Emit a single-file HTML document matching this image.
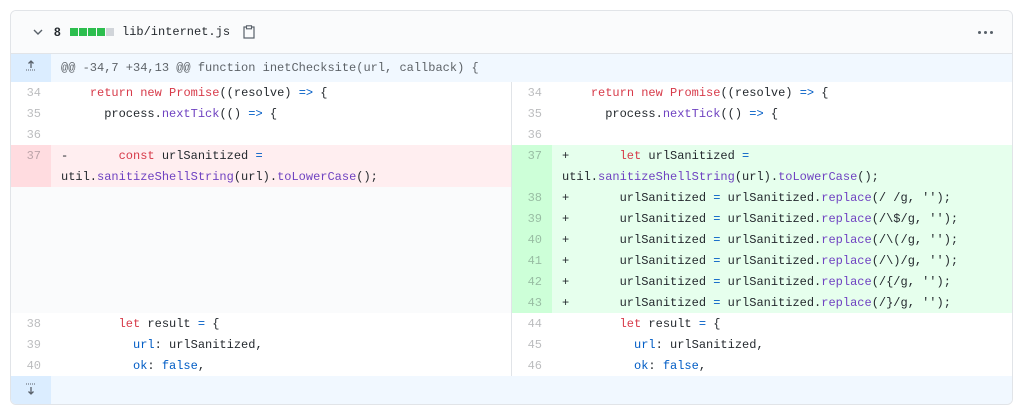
<!DOCTYPE html>
<html><head><meta charset="utf-8"><style>
*{margin:0;padding:0;box-sizing:border-box}
body{width:1023px;height:415px;background:#fff;position:relative;overflow:hidden;font-family:"Liberation Mono",monospace;font-size:12px;color:#24292e}
.box{position:absolute;left:10px;top:10px;width:1003px;height:395px;border:1px solid #e1e4e8;border-radius:6px;overflow:hidden}
.hdr{position:absolute;left:0;top:0;width:1001px;height:43px;background:#fafbfc;border-bottom:1px solid #e1e4e8}
.n{position:absolute;width:40px;text-align:right;padding-right:10px;color:rgba(27,31,35,.3);line-height:21px;top:0}
.c{position:absolute;padding-left:10px;line-height:21px;white-space:pre}
.k{color:#d73a49}.f{color:#6f42c1}.b{color:#005cc5}
</style></head><body>
<div class="box">
 <div class="hdr">
  <svg style="position:absolute;left:22px;top:16px" width="10" height="10" viewBox="0 0 10 10"><path d="M1 3l4 4 4-4" fill="none" stroke="#586069" stroke-width="1.4"/></svg>
  <div style="position:absolute;left:43px;top:12px;font-size:12px;line-height:18px;font-family:'Liberation Sans',sans-serif;color:#24292e;font-weight:bold">8</div>
  <div style="position:absolute;left:59px;top:17px;width:8px;height:8px;background:#2cbe4e"></div>
  <div style="position:absolute;left:68px;top:17px;width:8px;height:8px;background:#2cbe4e"></div>
  <div style="position:absolute;left:77px;top:17px;width:8px;height:8px;background:#2cbe4e"></div>
  <div style="position:absolute;left:86px;top:17px;width:8px;height:8px;background:#2cbe4e"></div>
  <div style="position:absolute;left:95px;top:17px;width:8px;height:8px;background:#d1d5da"></div>
  <div style="position:absolute;left:111px;top:12px;line-height:18px;color:#24292e">lib/internet.js</div>
  <svg style="position:absolute;left:232px;top:14px" width="12" height="14" viewBox="0 0 12 14"><rect x="1" y="2" width="10" height="11" fill="none" stroke="#586069" stroke-width="1.2"/><rect x="3.5" y="0.8" width="5" height="3" fill="#fafbfc" stroke="#586069" stroke-width="1.1"/></svg>
  <div style="position:absolute;left:967px;top:20px;width:3px;height:3px;border-radius:50%;background:#586069;box-shadow:6px 0 #586069,12px 0 #586069"></div>
 </div>
 <div style="position:absolute;left:0;top:43px;width:1001px;height:28px;background:#f1f8ff"></div>
 <div style="position:absolute;left:0;top:43px;width:40px;height:28px;background:#dbedff"></div>
 <svg style="position:absolute;left:13px;top:48px" width="14" height="14" viewBox="0 0 14 14"><path d="M7 2v7M4.5 4.5L7 2l2.5 2.5" fill="none" stroke="#586069" stroke-width="1.3"/><path d="M2 11h10" stroke="#586069" stroke-width="1" stroke-dasharray="1 1"/></svg>
 <div class="c" style="left:40px;top:47px;color:rgba(27,31,35,.7)">@@ -34,7 +34,13 @@ function inetChecksite(url, callback) {</div>
 <div style="position:absolute;left:500px;top:71px;width:1px;height:294px;background:#e1e4e8"></div>
 <div style="position:absolute;left:0;top:176px;width:500px;height:126px;background:#fafbfc"></div>
 <div style="position:absolute;left:0;top:134px;width:40px;height:42px;background:#ffdce0"></div>
 <div style="position:absolute;left:40px;top:134px;width:460px;height:42px;background:#ffeef0"></div>
 <div style="position:absolute;left:501px;top:134px;width:40px;height:168px;background:#cdffd8"></div>
 <div style="position:absolute;left:541px;top:134px;width:460px;height:168px;background:#e6ffed"></div>

 <div class="n" style="left:0;top:72px">34</div><div class="c" style="left:40px;top:72px">    <span class="k">return</span> <span class="k">new</span> <span class="k">Promise</span>((resolve) <span class="b">=&gt;</span> {</div>
 <div class="n" style="left:0;top:93px">35</div><div class="c" style="left:40px;top:93px">      process.<span class="f">nextTick</span>(() <span class="b">=&gt;</span> {</div>
 <div class="n" style="left:0;top:114px">36</div>
 <div class="n" style="left:0;top:135px">37</div><div class="c" style="left:40px;top:135px">-       <span class="k">const</span> urlSanitized <span class="b">=</span>
util.<span class="f">sanitizeShellString</span>(url).<span class="f">toLowerCase</span>();</div>
 <div class="n" style="left:0;top:303px">38</div><div class="c" style="left:40px;top:303px">        <span class="k">let</span> result <span class="b">=</span> {</div>
 <div class="n" style="left:0;top:324px">39</div><div class="c" style="left:40px;top:324px">          <span class="b">url</span>: urlSanitized,</div>
 <div class="n" style="left:0;top:345px">40</div><div class="c" style="left:40px;top:345px">          <span class="b">ok</span>: <span class="b">false</span>,</div>

 <div class="n" style="left:501px;top:72px">34</div><div class="c" style="left:541px;top:72px">    <span class="k">return</span> <span class="k">new</span> <span class="k">Promise</span>((resolve) <span class="b">=&gt;</span> {</div>
 <div class="n" style="left:501px;top:93px">35</div><div class="c" style="left:541px;top:93px">      process.<span class="f">nextTick</span>(() <span class="b">=&gt;</span> {</div>
 <div class="n" style="left:501px;top:114px">36</div>
 <div class="n" style="left:501px;top:135px">37</div><div class="c" style="left:541px;top:135px">+       <span class="k">let</span> urlSanitized <span class="b">=</span>
util.<span class="f">sanitizeShellString</span>(url).<span class="f">toLowerCase</span>();</div>
 <div class="n" style="left:501px;top:177px">38</div><div class="c" style="left:541px;top:177px">+       urlSanitized <span class="b">=</span> urlSanitized.<span class="f">replace</span>(/ /g, '');</div>
 <div class="n" style="left:501px;top:198px">39</div><div class="c" style="left:541px;top:198px">+       urlSanitized <span class="b">=</span> urlSanitized.<span class="f">replace</span>(/\$/g, '');</div>
 <div class="n" style="left:501px;top:219px">40</div><div class="c" style="left:541px;top:219px">+       urlSanitized <span class="b">=</span> urlSanitized.<span class="f">replace</span>(/\(/g, '');</div>
 <div class="n" style="left:501px;top:240px">41</div><div class="c" style="left:541px;top:240px">+       urlSanitized <span class="b">=</span> urlSanitized.<span class="f">replace</span>(/\)/g, '');</div>
 <div class="n" style="left:501px;top:261px">42</div><div class="c" style="left:541px;top:261px">+       urlSanitized <span class="b">=</span> urlSanitized.<span class="f">replace</span>(/{/g, '');</div>
 <div class="n" style="left:501px;top:282px">43</div><div class="c" style="left:541px;top:282px">+       urlSanitized <span class="b">=</span> urlSanitized.<span class="f">replace</span>(/}/g, '');</div>
 <div class="n" style="left:501px;top:303px">44</div><div class="c" style="left:541px;top:303px">        <span class="k">let</span> result <span class="b">=</span> {</div>
 <div class="n" style="left:501px;top:324px">45</div><div class="c" style="left:541px;top:324px">          <span class="b">url</span>: urlSanitized,</div>
 <div class="n" style="left:501px;top:345px">46</div><div class="c" style="left:541px;top:345px">          <span class="b">ok</span>: <span class="b">false</span>,</div>

 <div style="position:absolute;left:0;top:365px;width:1001px;height:28px;background:#f1f8ff"></div>
 <div style="position:absolute;left:0;top:365px;width:40px;height:28px;background:#dbedff"></div>
 <svg style="position:absolute;left:13px;top:370px" width="14" height="16" viewBox="0 0 14 16"><path d="M2 3h10" stroke="#586069" stroke-width="1" stroke-dasharray="1 1"/><path d="M7 6v7M4.5 10.5L7 13l2.5-2.5" fill="none" stroke="#586069" stroke-width="1.3"/></svg>
</div>
</body></html>
